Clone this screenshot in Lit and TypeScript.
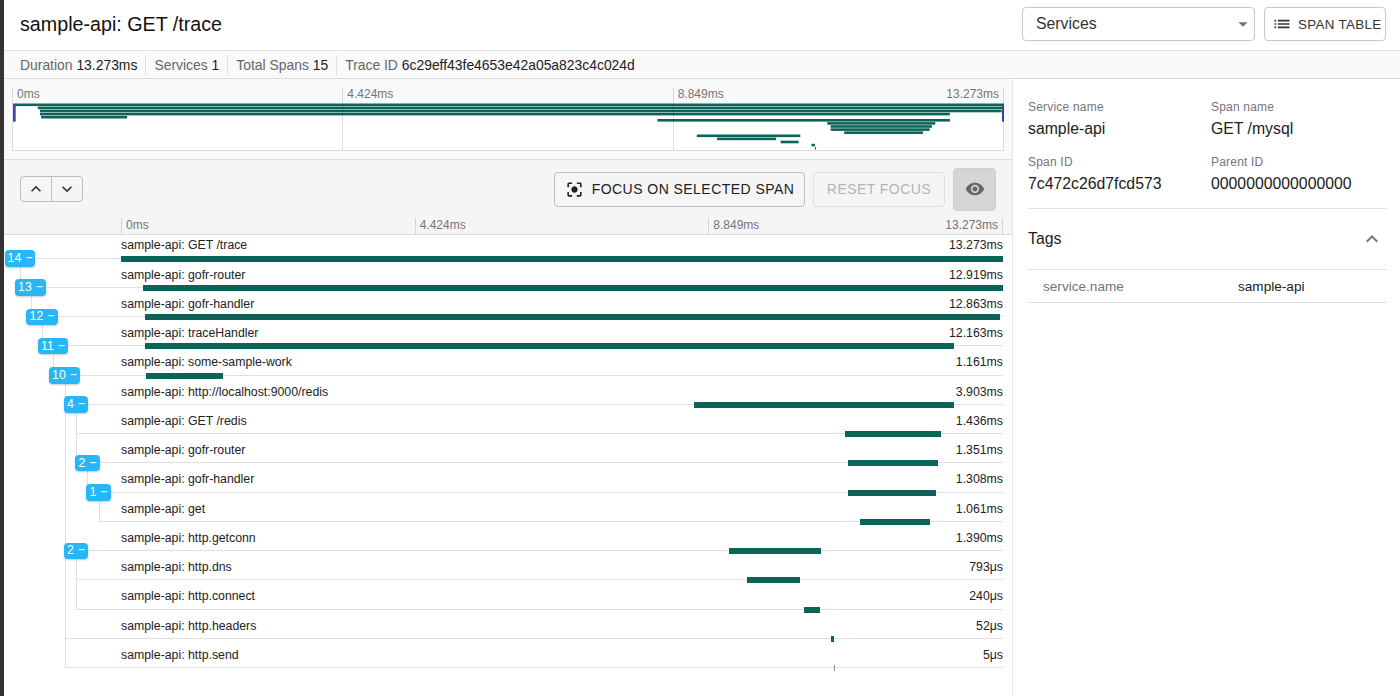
import { LitElement, css, html, svg } from 'lit';
import { customElement } from 'lit/decorators.js';

const ROW_H = 29.27;
const PANE_X = 4; // dark strip on the left of the page
const TL_START = 121;
const TL_WIDTH = 882;

interface Span {
  name: string;
  time: string;
  from: number;
  to: number;
  line: number; // x where the row's rule starts
  badge?: { label: string; x: number; w: number };
  drop?: { x: number; rows: number }; // connector going down from this row
  thin?: boolean;
}

const SPANS: Span[] = [
  { name: 'GET /trace', time: '13.273ms', from: 121, to: 1003, line: 20, badge: { label: '14', x: 5, w: 30 }, drop: { x: 20, rows: 1 } },
  { name: 'gofr-router', time: '12.919ms', from: 143, to: 1003, line: 31, badge: { label: '13', x: 15, w: 31 }, drop: { x: 31, rows: 1 } },
  { name: 'gofr-handler', time: '12.863ms', from: 145, to: 1000, line: 42, badge: { label: '12', x: 26, w: 32 }, drop: { x: 42, rows: 1 } },
  { name: 'traceHandler', time: '12.163ms', from: 145, to: 954, line: 53, badge: { label: '11', x: 38, w: 30 }, drop: { x: 53, rows: 1 } },
  { name: 'some-sample-work', time: '1.161ms', from: 146, to: 222.5, line: 65, badge: { label: '10', x: 49, w: 31 }, drop: { x: 65, rows: 10 } },
  { name: 'http://localhost:9000/redis', time: '3.903ms', from: 694, to: 954, line: 76, badge: { label: '4', x: 64, w: 24 }, drop: { x: 76, rows: 2 } },
  { name: 'GET /redis', time: '1.436ms', from: 845, to: 941, line: 76 },
  { name: 'gofr-router', time: '1.351ms', from: 848, to: 938, line: 87, badge: { label: '2', x: 75, w: 25 }, drop: { x: 87, rows: 1 } },
  { name: 'gofr-handler', time: '1.308ms', from: 848, to: 936, line: 99, badge: { label: '1', x: 86, w: 25 }, drop: { x: 99, rows: 1 } },
  { name: 'get', time: '1.061ms', from: 860, to: 930, line: 99 },
  { name: 'http.getconn', time: '1.390ms', from: 729, to: 821, line: 76, badge: { label: '2', x: 64, w: 24 }, drop: { x: 76, rows: 2 } },
  { name: 'http.dns', time: '793μs', from: 747, to: 799.5, line: 76 },
  { name: 'http.connect', time: '240μs', from: 803.5, to: 819.5, line: 76 },
  { name: 'http.headers', time: '52μs', from: 831, to: 834, line: 65 },
  { name: 'http.send', time: '5μs', from: 834, to: 834.7, line: 65, thin: true },
];

const pct = (x: number) => ((x - TL_START) / TL_WIDTH) * 100;

const icon = (d: string, size: number) => html`
  <svg class="icon" width=${size} height=${size} viewBox="0 0 24 24" fill="currentColor"><path d=${d}></path></svg>
`;

const ICONS = {
  list: 'M3 13h2v-2H3v2zm0 4h2v-2H3v2zm0-8h2V7H3v2zm4 4h14v-2H7v2zm0 4h14v-2H7v2zM7 7v2h14V7H7z',
  less: 'M12 8l-6 6 1.41 1.41L12 10.83l4.59 4.58L18 14z',
  more: 'M16.59 8.59L12 13.17 7.41 8.59 6 10l6 6 6-6z',
  focus: 'M12 8c-2.21 0-4 1.79-4 4s1.79 4 4 4 4-1.79 4-4-1.79-4-4-4zm-7 7H3v4c0 1.1.9 2 2 2h4v-2H5v-4zM5 5h4V3H5c-1.1 0-2 .9-2 2v4h2V5zm14-2h-4v2h4v4h2V5c0-1.1-.9-2-2-2zm0 16h-4v2h4c1.1 0 2-.9 2-2v-4h-2v4z',
  eye: 'M12 4.5C7 4.5 2.73 7.61 1 12c1.73 4.39 6 7.5 11 7.5s9.27-3.11 11-7.5c-1.73-4.39-6-7.5-11-7.5zM12 17c-2.76 0-5-2.24-5-5s2.24-5 5-5 5 2.24 5 5-2.24 5-5 5zm0-8c-1.66 0-3 1.34-3 3s1.34 3 3 3 3-1.34 3-3-1.34-3-3-3z',
  caret: 'M7 10l5 5 5-5z',
};

@customElement('app-root')
export class AppRoot extends LitElement {
  static styles = css`
    :host {
      display: flex;
      height: 696px;
      overflow: hidden;
      background: #fff;
      color: #212121;
      font-family: 'Liberation Sans', Arial, sans-serif;
    }

    .strip {
      flex: 0 0 4px;
      background: #333;
    }

    .page {
      flex: 1;
      min-width: 0;
      display: flex;
      flex-direction: column;
    }

    .icon {
      display: block;
      flex: none;
    }

    /* HEADER ////////////////////////////////////////////////////////////// */

    header {
      box-sizing: border-box;
      height: 51px;
      display: flex;
      align-items: center;
      padding: 0 14px 2px 16px;
      border-bottom: 1px solid #e0e0e0;
    }

    h1 {
      flex: 1;
      margin: 0;
      font-size: 19.7px;
      font-weight: 400;
      color: #111;
    }

    .select {
      box-sizing: border-box;
      width: 233px;
      height: 34px;
      display: flex;
      align-items: center;
      justify-content: space-between;
      padding: 0 0 0 13px;
      margin-right: 9px;
      font-size: 15.8px;
      border: 1px solid #c8c8c8;
      border-radius: 4px;
      color: #333;
    }

    .select .icon {
      color: #757575;
    }

    .table-btn {
      box-sizing: border-box;
      width: 122px;
      height: 34px;
      display: flex;
      align-items: center;
      gap: 6px;
      padding-left: 7px;
      font-size: 13.4px;
      letter-spacing: 0.3px;
      border: 1px solid #c8c8c8;
      border-radius: 4px;
      color: #333;
    }

    /* INFO BAR //////////////////////////////////////////////////////////// */

    .info {
      box-sizing: border-box;
      height: 28px;
      display: flex;
      align-items: center;
      padding-left: 16px;
      background: #fafafa;
      border-bottom: 1px solid #dcdcdc;
      font-size: 13.9px;
    }

    .info div {
      padding: 0 8px;
      line-height: 20px;
      border-right: 1px solid #e0e0e0;
      color: #666;
    }

    .info div:first-child {
      padding-left: 0;
    }

    .info div:last-child {
      border-right: 0;
    }

    .info b {
      font-weight: 400;
      color: #212121;
    }

    /* BODY //////////////////////////////////////////////////////////////// */

    .body {
      flex: 1;
      min-height: 0;
      display: flex;
    }

    .pane {
      flex: 0 0 1008px;
      display: flex;
      flex-direction: column;
    }

    .overview {
      box-sizing: border-box;
      height: 81px;
      padding: 8px 8px 0 8px;
      background: #f9f9f9;
      border-bottom: 1px solid #e0e0e0;
    }

    .map {
      position: relative;
      box-sizing: border-box;
      width: 992px;
      height: 64px;
      border-bottom: 1px solid #dcdcdc;
    }

    .map svg {
      position: absolute;
      left: 0;
      top: 16px;
      width: 100%;
      height: 47px;
      background: #fff;
    }

    .ticks {
      position: relative;
      height: 100%;
      display: grid;
      grid-template-columns: repeat(3, 1fr);
      font-size: 12px;
      color: #757575;
      border-right: 1px solid rgba(0, 0, 0, 0.13);
    }

    .ticks span {
      padding: 0 4px;
      line-height: 15px;
    }

    .ticks div {
      display: flex;
      justify-content: space-between;
      border-left: 1px solid rgba(0, 0, 0, 0.13);
    }

    .toolbar {
      box-sizing: border-box;
      height: 58px;
      display: flex;
      align-items: center;
      justify-content: space-between;
      padding: 0 16px;
      background: #f5f5f5;
    }

    .updown {
      display: flex;
      height: 26px;
      border: 1px solid #bdbdbd;
      border-radius: 4px;
      box-sizing: border-box;
      color: #333;
    }

    .updown span {
      width: 30px;
      display: flex;
      align-items: center;
      justify-content: center;
    }

    .updown span + span {
      border-left: 1px solid #bdbdbd;
    }

    .actions {
      display: flex;
      align-items: center;
      gap: 8px;
    }

    .btn {
      box-sizing: border-box;
      height: 35px;
      display: flex;
      align-items: center;
      justify-content: center;
      gap: 8px;
      font-size: 14px;
      letter-spacing: 0.45px;
      border: 1px solid #bdbdbd;
      border-radius: 4px;
      color: #212121;
    }

    .btn.focus {
      width: 251px;
    }

    .btn.reset {
      width: 132px;
      color: #b4b4b4;
      border-color: #e0e0e0;
    }

    .btn.eye {
      width: 43px;
      height: 43px;
      background: #d5d5d5;
      border-color: #cfcfcf;
      color: #666;
    }

    .ruler {
      box-sizing: border-box;
      height: 17px;
      padding: 0 9px 0 117px;
      background: #f5f5f5;
      border-bottom: 1px solid #dcdcdc;
    }

    .rows {
      flex: 1;
      padding-right: 9px;
      font-size: 12.3px;
      color: #222;
    }

    .row {
      position: relative;
      box-sizing: border-box;
      height: ${ROW_H}px;
      padding: 8px 0 0 117px;
      display: flex;
      justify-content: space-between;
      line-height: 17px;
    }

    .row:first-child {
      height: 23.5px;
      padding-top: 2px;
    }

    .rule {
      position: absolute;
      right: 0;
      bottom: 0;
      height: 1px;
      background: #e0e0e0;
    }

    .drop {
      position: absolute;
      top: 100%;
      width: 1px;
      margin-top: -1px;
      background: #e0e0e0;
    }

    .track {
      position: absolute;
      left: 117px;
      right: 0;
      bottom: -3px;
      height: 6px;
    }

    .bar {
      position: absolute;
      top: 0;
      height: 100%;
      background: #0b6457;
    }

    .bar.thin {
      background: #7f9a96;
    }

    .badge {
      position: absolute;
      bottom: -8px;
      z-index: 2;
      box-sizing: border-box;
      height: 16.5px;
      display: flex;
      align-items: center;
      justify-content: center;
      gap: 4px;
      font-size: 12.3px;
      color: #fff;
      background: #29b6f6;
      border-radius: 4px;
      box-shadow: 0 1px 2px rgba(0, 0, 0, 0.22);
    }

    /* DETAILS ///////////////////////////////////////////////////////////// */

    aside {
      flex: 1;
      box-sizing: border-box;
      padding: 21px 13px 0 15px;
      border-left: 1px solid #e6e6e6;
    }

    .fields {
      display: grid;
      grid-template-columns: 183px 1fr;
      row-gap: 16px;
      padding-bottom: 14px;
      border-bottom: 1px solid #e0e0e0;
    }

    .fields label {
      display: block;
      font-size: 12px;
      letter-spacing: 0.2px;
      line-height: 15px;
      color: #757575;
    }

    .fields span {
      display: block;
      margin-top: 4px;
      font-size: 15.8px;
      line-height: 20px;
      color: #212121;
    }

    .tags-head {
      box-sizing: border-box;
      height: 61px;
      display: flex;
      align-items: center;
      justify-content: space-between;
      padding-right: 3px;
      font-size: 15.8px;
      border-bottom: 1px solid #e0e0e0;
    }

    .tags-head .icon {
      color: #757575;
    }

    .tag {
      box-sizing: border-box;
      height: 33px;
      display: grid;
      grid-template-columns: 195px 1fr;
      align-items: center;
      padding-left: 15px;
      font-size: 13.6px;
      color: #757575;
      border-bottom: 1px solid #e0e0e0;
    }

    .tag span + span {
      color: #212121;
    }
  `;

  private renderMap() {
    const scale = 990 / TL_WIDTH;
    return html`
      <svg viewBox="0 0 990 47" preserveAspectRatio="none">
        ${SPANS.map((s, i) => svg`
          <rect x=${(s.from - TL_START) * scale + 1} y=${0.5 + i * 3.1} width=${Math.max((s.to - s.from) * scale, 1)} height="2.6" fill="#0b6457"></rect>
        `)}
        <rect x="1" y="1" width="2.7" height="17.7" fill="#3949ab"></rect>
        <rect x="988" y="1" width="2.7" height="17.7" fill="#3949ab"></rect>
      </svg>
    `;
  }

  private renderTicks() {
    return html`
      <div class="ticks">
        <div><span>0ms</span></div>
        <div><span>4.424ms</span></div>
        <div><span>8.849ms</span><span>13.273ms</span></div>
      </div>
    `;
  }

  private renderRow(s: Span) {
    return html`
      <div class="row">
        <div class="rule" style="left:${s.line - PANE_X}px"></div>
        ${s.drop ? html`<div class="drop" style="left:${s.drop.x - PANE_X}px;height:${s.drop.rows * ROW_H}px"></div>` : ''}
        <div class="track">
          <div class="bar ${s.thin ? 'thin' : ''}" style="left:${pct(s.from)}%;width:${pct(s.to) - pct(s.from)}%"></div>
        </div>
        ${s.badge
          ? html`<div class="badge" style="left:${s.badge.x - PANE_X}px;width:${s.badge.w}px"><span>${s.badge.label}</span><span>−</span></div>`
          : ''}
        <span>sample-api: ${s.name}</span>
        <span>${s.time}</span>
      </div>
    `;
  }

  render() {
    return html`
      <div class="strip"></div>
      <div class="page">
        <header>
          <h1>sample-api: GET /trace</h1>
          <div class="select">Services ${icon(ICONS.caret, 22)}</div>
          <div class="table-btn">${icon(ICONS.list, 20)} SPAN TABLE</div>
        </header>
        <div class="info">
          <div>Duration <b>13.273ms</b></div>
          <div>Services <b>1</b></div>
          <div>Total Spans <b>15</b></div>
          <div>Trace ID <b>6c29eff43fe4653e42a05a823c4c024d</b></div>
        </div>
        <div class="body">
          <div class="pane">
            <div class="overview">
              <div class="map">${this.renderMap()}${this.renderTicks()}</div>
            </div>
            <div class="toolbar">
              <div class="updown">
                <span>${icon(ICONS.less, 20)}</span>
                <span>${icon(ICONS.more, 20)}</span>
              </div>
              <div class="actions">
                <div class="btn focus">${icon(ICONS.focus, 19)} FOCUS ON SELECTED SPAN</div>
                <div class="btn reset">RESET FOCUS</div>
                <div class="btn eye">${icon(ICONS.eye, 20)}</div>
              </div>
            </div>
            <div class="ruler">${this.renderTicks()}</div>
            <div class="rows">${SPANS.map(s => this.renderRow(s))}</div>
          </div>
          <aside>
            <div class="fields">
              <div><label>Service name</label><span>sample-api</span></div>
              <div><label>Span name</label><span>GET /mysql</span></div>
              <div><label>Span ID</label><span>7c472c26d7fcd573</span></div>
              <div><label>Parent ID</label><span>0000000000000000</span></div>
            </div>
            <div class="tags-head">Tags ${icon(ICONS.less, 24)}</div>
            <div class="tag"><span>service.name</span><span>sample-api</span></div>
          </aside>
        </div>
      </div>
    `;
  }
}
